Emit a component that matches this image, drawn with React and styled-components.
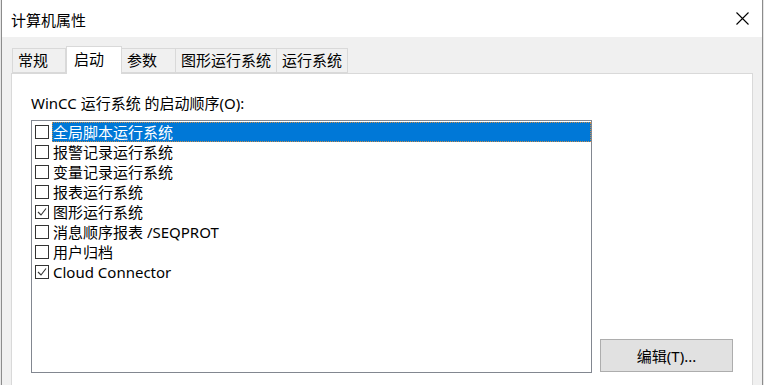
import React from 'react';
import styled, { createGlobalStyle } from 'styled-components';

const GlobalStyle = createGlobalStyle`
	html, body {
		margin: 0;
		padding: 0;
		background: #e6e6e6;
		overflow: hidden;
	}
	body {
		font-family: 'Noto Sans', 'Noto Sans CJK SC', sans-serif;
		font-size: 15px;
		color: #000;
	}
`;

const items = [
	{ label: '全局脚本运行系统', checked: false, selected: true },
	{ label: '报警记录运行系统', checked: false },
	{ label: '变量记录运行系统', checked: false },
	{ label: '报表运行系统', checked: false },
	{ label: '图形运行系统', checked: true },
	{ label: '消息顺序报表 /SEQPROT', checked: false },
	{ label: '用户归档', checked: false },
	{ label: 'Cloud Connector', checked: true },
];

const tabs = ['常规', '启动', '参数', '图形运行系统', '运行系统'];

const Window = styled.div`
	margin-left: 1px;
	width: 762px;
	height: 400px;
	box-sizing: border-box;
	border-left: 1px solid #8c8c8c;
	border-right: 1px solid #8c8c8c;
	background: #f0f0f0;
	display: flex;
	flex-direction: column;
`;

const TitleBar = styled.div`
	height: 37px;
	flex: none;
	background: #fff;
	display: flex;
	align-items: center;
	justify-content: space-between;
	padding: 0 13px 0 9px;
	box-sizing: border-box;
`;

const TitleText = styled.span`
	font-family: 'Noto Sans CJK SC', sans-serif;
	font-size: 15px;
	line-height: 20px;
	margin-top: 2px;
`;

const Body = styled.div`
	flex: 1;
	display: flex;
	flex-direction: column;
	padding: 10px 9px 0 9px;
`;

const TabRow = styled.div`
	display: flex;
	align-items: flex-end;
	height: 27px;
	padding-left: 1px;
	position: relative;
	z-index: 1;
	margin-bottom: -1px;
`;

const Tab = styled.div`
	box-sizing: border-box;
	height: ${(p) => (p.$active ? '28px' : '25px')};
	min-width: ${(p) => (p.$active ? '56px' : '54px')};
	padding: 0 ${(p) => (p.$active ? '7px' : '5px')};
	margin-bottom: ${(p) => (p.$active ? '0' : '1px')};
	background: ${(p) => (p.$active ? '#fff' : '#f0f0f0')};
	border: 1px solid #d9d9d9;
	border-left: ${(p) => (p.$first || p.$active ? '1px solid #d9d9d9' : 'none')};
	border-bottom: ${(p) => (p.$active ? 'none' : '1px solid #d9d9d9')};
	font-family: 'Noto Sans CJK SC', sans-serif;
	font-size: 15px;
	line-height: 22px;
	padding-top: ${(p) => (p.$active ? '1px' : '0')};
	white-space: nowrap;
`;

const Panel = styled.div`
	flex: 1;
	background: #fff;
	border: 1px solid #d9d9d9;
	padding: 18px 19px 0 19px;
	display: flex;
	flex-direction: column;
`;

const Caption = styled.div`
	line-height: 22px;
	height: 22px;
	margin-bottom: 6px;
	white-space: nowrap;
`;

const Content = styled.div`
	display: flex;
	align-items: flex-end;
	gap: 8px;
`;

const ListBox = styled.div`
	width: 561px;
	height: 253px;
	box-sizing: border-box;
	border: 1px solid #828790;
	background: #fff;
	padding-top: 1px;
`;

const Row = styled.div`
	display: flex;
	align-items: center;
	height: 20px;
`;

const BoxCell = styled.div`
	width: 20px;
	height: 20px;
	display: flex;
	align-items: center;
	padding-left: 3px;
	box-sizing: border-box;
`;

const Box = styled.div`
	width: 14px;
	height: 14px;
	box-sizing: border-box;
	border: 1px solid #333;
	background: #fff;
	display: flex;
	align-items: center;
	justify-content: center;
`;

const ItemLabel = styled.span`
	flex: 1;
	height: 20px;
	line-height: 21px;
	padding-left: 1px;
	white-space: nowrap;
	box-sizing: border-box;
	background: ${(p) => (p.$selected ? '#0078d7' : 'transparent')};
	color: ${(p) => (p.$selected ? '#fff' : '#000')};
	outline: ${(p) => (p.$selected ? '1px dotted #c98c4a' : 'none')};
	outline-offset: -1px;
`;

const Button = styled.button`
	width: 133px;
	height: 33px;
	margin-bottom: 1px;
	background: #e1e1e1;
	border: 1px solid #adadad;
	font-family: 'Noto Sans', 'Noto Sans CJK SC', sans-serif;
	font-size: 15px;
	color: #000;
	padding: 0;
`;

const Check = () => (
	<svg width="10" height="10" viewBox="0 0 10 10">
		<polyline points="1,5 4,8 9,1.5" fill="none" stroke="#333" strokeWidth="1.1" />
	</svg>
);

const CloseIcon = () => (
	<svg width="13" height="13" viewBox="0 0 13 13">
		<path d="M0.5 0.5 L12.5 12.5 M12.5 0.5 L0.5 12.5" stroke="#000" strokeWidth="1.1" />
	</svg>
);

const App = () => {
	return (
		<>
			<GlobalStyle />
			<Window>
				<TitleBar>
					<TitleText>计算机属性</TitleText>
					<CloseIcon />
				</TitleBar>
				<Body>
					<TabRow>
						{tabs.map((t, i) => (
							<Tab key={t} $first={i === 0} $active={t === '启动'}>
								{t}
							</Tab>
						))}
					</TabRow>
					<Panel>
						<Caption>WinCC 运行系统 的启动顺序(O):</Caption>
						<Content>
							<ListBox>
								{items.map((it) => (
									<Row key={it.label}>
										<BoxCell>
											<Box>{it.checked && <Check />}</Box>
										</BoxCell>
										<ItemLabel $selected={it.selected}>{it.label}</ItemLabel>
									</Row>
								))}
							</ListBox>
							<Button>编辑(T)...</Button>
						</Content>
					</Panel>
				</Body>
			</Window>
		</>
	);
};

export default App;
